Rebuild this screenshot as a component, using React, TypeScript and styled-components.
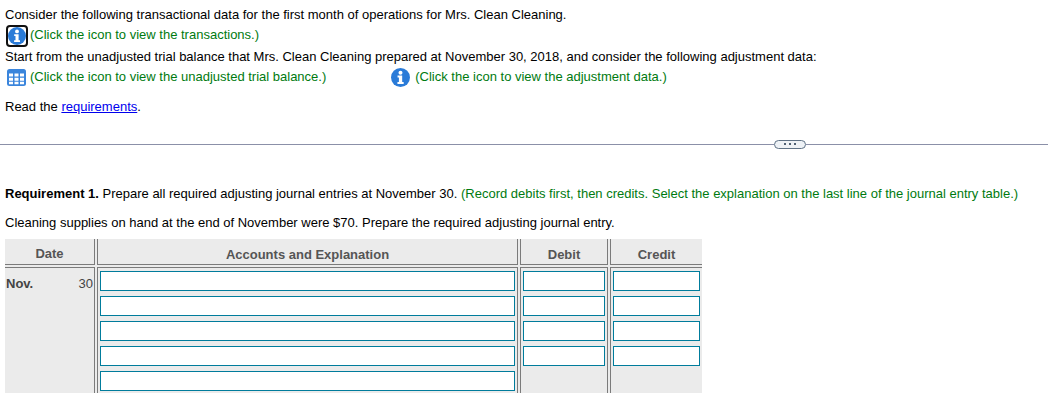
import React from "react";
import styled, { createGlobalStyle } from "styled-components";

const Global = createGlobalStyle`
  html, body { margin: 0; padding: 0; background: #fff; }
  body { font-family: "Liberation Sans", Arial, sans-serif; font-size: 13px; color: #000; overflow: hidden; }
`;

const Page = styled.div`
  width: 1048px;
  height: 416px;
  overflow: hidden;
`;

const Intro = styled.div`
  padding: 7px 0 0 5px;
  height: 137px;
  box-sizing: border-box;
`;

const Line = styled.div<{ $h: number; $mb?: number }>`
  height: ${(p) => p.$h}px;
  line-height: ${(p) => p.$h}px;
  margin-bottom: ${(p) => p.$mb ?? 0}px;
  white-space: nowrap;
  display: flex;
  align-items: center;
`;

const Hint = styled.span`
  color: #007a10;
`;

const RaisedHint = styled(Hint)`
  align-self: flex-start;
  line-height: 18px;
  padding-top: 1px;
`;

const Framed = styled.span`
  display: inline-flex;
  align-items: center;
  justify-content: center;
  width: 22px;
  height: 22px;
  box-sizing: border-box;
  border: 2px solid #111;
  border-radius: 4px;
  margin: 0 2px 0 1px;
`;

const IconSlot = styled.span<{ $pl: number }>`
  display: inline-flex;
  width: 25px;
  align-items: center;
  padding-left: ${(p) => p.$pl}px;
  box-sizing: border-box;
`;

const DataCell = styled.span`
  display: inline-flex;
  align-items: center;
  margin-left: 64px;
`;

const Anchor = styled.a`
  color: #0000ee;
  text-decoration: underline;
`;

const Divider = styled.div`
  display: flex;
  align-items: center;
  height: 14px;
`;

const Rule = styled.div<{ $w?: number }>`
  height: 1px;
  background: #8b90a8;
  flex: ${(p) => (p.$w ? `0 0 ${p.$w}px` : "1")};
`;

const Pill = styled.div`
  width: 32px;
  height: 9px;
  box-sizing: border-box;
  border: 1px solid #5f7286;
  border-radius: 5px;
  background: #eef2f6;
  display: flex;
  align-items: center;
  justify-content: center;
  gap: 3px;
`;

const Dot = styled.i`
  width: 2px;
  height: 2px;
  background: #4f6073;
  display: block;
`;

const Body = styled.div`
  padding: 34px 0 0 5px;
`;

const Hdr = styled.div<{ $mb: number }>`
  height: 17px;
  line-height: 17px;
  white-space: nowrap;
  margin-bottom: ${(p) => p.$mb}px;
`;

const Lead = styled.b`
  font-weight: 700;
`;

const Table = styled.div`
  display: grid;
  grid-template-columns: 90px 421px 88px 92px;
  grid-template-rows: 26px 126px;
  column-gap: 2px;
  row-gap: 2px;
  width: 697px;
  background: #ebebeb;
`;

const HeadCell = styled.div<{ $l?: boolean; $r?: boolean; $pt?: number }>`
  box-sizing: border-box;
  border-bottom: 1px solid #7b7b7b;
  border-left: ${(p) => (p.$l ? "1px solid #7b7b7b" : "0")};
  border-right: ${(p) => (p.$r ? "1px solid #7b7b7b" : "0")};
  display: flex;
  align-items: center;
  justify-content: center;
  font-weight: 700;
  color: #555;
  padding-top: ${(p) => p.$pt ?? 6}px;
`;

const BodyCell = styled.div<{ $l?: boolean; $r?: boolean }>`
  box-sizing: border-box;
  border-top: 1px solid #7b7b7b;
  border-left: ${(p) => (p.$l ? "1px solid #7b7b7b" : "0")};
  border-right: ${(p) => (p.$r ? "1px solid #7b7b7b" : "0")};
  display: flex;
  flex-direction: column;
  gap: 5px;
  padding: 3px 2px 0;
`;

const DateCell = styled(BodyCell)`
  flex-direction: row;
  justify-content: space-between;
  color: #444;
  padding: 9px 1px 0 1px;
  line-height: 14px;
`;

const Month = styled.b`
  font-weight: 700;
`;

const Field = styled.input`
  display: block;
  box-sizing: border-box;
  width: 100%;
  height: 20px;
  border: 1px solid #007c9c;
  background: #fff;
  padding: 0;
  margin: 0;
  border-radius: 0;
  outline: none;
`;

const InfoIcon = ({ size = 19 }: { size?: number }) => (
  <svg width={size} height={size} viewBox="0 0 18 18" aria-hidden="true">
    <circle cx="9" cy="9" r="9" fill="#2a7bd8" />
    <circle cx="9" cy="4.4" r="1.9" fill="#fff" />
    <path d="M6.2 7.2h4.4v6h1.4v1.9H6.1v-1.9h1.4V9.1H6.2z" fill="#fff" />
  </svg>
);

const GridIcon = () => (
  <svg width="19" height="17" viewBox="0 0 19 17" aria-hidden="true">
    <rect x="0" y="0" width="19" height="17" rx="2.5" fill="#3a85dc" />
    <path
      d="M2 4.5h4v3H2zM7.5 4.5h4v3h-4zM13 4.5h4v3h-4zM2 8.7h4v3H2zM7.5 8.7h4v3h-4zM13 8.7h4v3h-4zM2 12.7h4v2.5H2zM7.5 12.7h4v2.5h-4zM13 12.7h4v2.5h-4z"
      fill="#fff"
    />
  </svg>
);

const rows = (n: number) =>
  Array.from({ length: n }, (_, i) => <Field key={i} aria-label={`row ${i + 1}`} readOnly />);

export default function App() {
  return (
    <Page>
      <Global />
      <Intro>
        <Line $h={16} $mb={2}>Consider the following transactional data for the first month of operations for Mrs. Clean Cleaning.</Line>
        <Line $h={22} $mb={2}>
          <Framed><InfoIcon size={18} /></Framed>
          <RaisedHint>(Click the icon to view the transactions.)</RaisedHint>
        </Line>
        <Line $h={16} $mb={3}>Start from the unadjusted trial balance that Mrs. Clean Cleaning prepared at November 30, 2018, and consider the following adjustment data:</Line>
        <Line $h={18} $mb={13}>
          <IconSlot $pl={2}><GridIcon /></IconSlot>
          <Hint>(Click the icon to view the unadjusted trial balance.)</Hint>
          <DataCell>
            <IconSlot $pl={1}><InfoIcon /></IconSlot>
            <Hint>(Click the icon to view the adjustment data.)</Hint>
          </DataCell>
        </Line>
        <Line $h={16}>Read the&nbsp;<Anchor href="#">requirements</Anchor>.</Line>
      </Intro>
      <Divider>
        <Rule />
        <Pill><Dot /><Dot /><Dot /></Pill>
        <Rule $w={242} />
      </Divider>
      <Body>
        <Hdr $mb={12}>
          <span><Lead>Requirement 1.</Lead> Prepare all required adjusting journal entries at November 30. </span>
          <Hint>(Record debits first, then credits. Select the explanation on the last line of the journal entry table.)</Hint>
        </Hdr>
        <Hdr $mb={8}>Cleaning supplies on hand at the end of November were $70. Prepare the required adjusting journal entry.</Hdr>
        <Table>
          <HeadCell $r $pt={4}>Date</HeadCell>
          <HeadCell $l $r>Accounts and Explanation</HeadCell>
          <HeadCell $l $r>Debit</HeadCell>
          <HeadCell $l>Credit</HeadCell>
          <DateCell $r><Month>Nov.</Month><span>30</span></DateCell>
          <BodyCell $l $r>{rows(5)}</BodyCell>
          <BodyCell $l $r>{rows(4)}</BodyCell>
          <BodyCell $l>{rows(4)}</BodyCell>
        </Table>
      </Body>
    </Page>
  );
}
